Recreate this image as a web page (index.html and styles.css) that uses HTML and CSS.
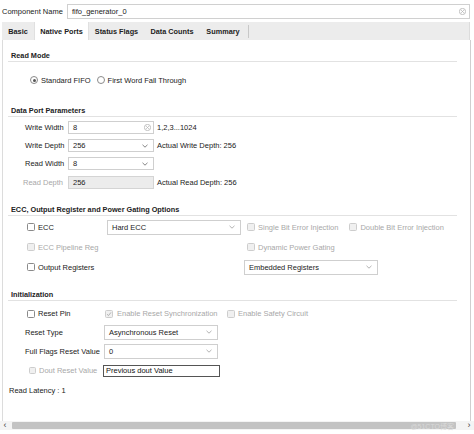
FILE: index.html
```html
<!DOCTYPE html>
<html>
<head>
<meta charset="utf-8">
<link rel="stylesheet" href="styles.css">
</head>
<body>
<div class="top">
  <span class="top-label">Component Name</span>
  <div class="name-input">
    <span>fifo_generator_0</span>
    <svg class="clear" width="7" height="7" viewBox="0 0 7 7"><circle cx="3.5" cy="3.5" r="3.1" fill="none" stroke="#b8b8b8" stroke-width="0.9"/><path d="M2.2 2.2 L4.8 4.8 M4.8 2.2 L2.2 4.8" stroke="#b8b8b8" stroke-width="0.9"/></svg>
  </div>
</div>
<div class="tabs">
  <div class="tab t-basic">Basic</div>
  <div class="tab t-native active">Native Ports</div>
  <div class="tab t-status">Status Flags</div>
  <div class="tab t-data">Data Counts</div>
  <div class="tab t-summary">Summary</div>
  <div class="tab-sep"></div>
</div>
<div class="panel">
  <div class="sec-head first">Read Mode</div>
  <div class="radio-row">
    <span class="radio on"></span><span class="rlabel">Standard FIFO</span>
    <span class="radio"></span><span class="rlabel">First Word Fall Through</span>
  </div>

  <div class="sec-head s2">Data Port Parameters</div>
  <div class="dp-rows">
    <div class="dp-row">
      <span class="dp-label">Write Width</span>
      <div class="box dp-box"><span>8</span>
        <svg class="clear" width="7" height="7" viewBox="0 0 7 7"><circle cx="3.5" cy="3.5" r="3.1" fill="none" stroke="#b8b8b8" stroke-width="0.9"/><path d="M2.2 2.2 L4.8 4.8 M4.8 2.2 L2.2 4.8" stroke="#b8b8b8" stroke-width="0.9"/></svg>
      </div>
      <span class="hint">1,2,3...1024</span>
    </div>
    <div class="dp-row">
      <span class="dp-label">Write Depth</span>
      <div class="box dp-box"><span>256</span>
        <svg class="chev" width="6" height="4" viewBox="0 0 6 4"><path d="M0.5 0.8 L3 3.2 L5.5 0.8" fill="none" stroke="#777" stroke-width="0.9"/></svg>
      </div>
      <span class="hint">Actual Write Depth: 256</span>
    </div>
    <div class="dp-row">
      <span class="dp-label">Read Width</span>
      <div class="box dp-box"><span>8</span>
        <svg class="chev" width="6" height="4" viewBox="0 0 6 4"><path d="M0.5 0.8 L3 3.2 L5.5 0.8" fill="none" stroke="#777" stroke-width="0.9"/></svg>
      </div>
    </div>
    <div class="dp-row last">
      <span class="dp-label dis rd">Read Depth</span>
      <div class="box dp-box gray"><span>256</span></div>
      <span class="hint">Actual Read Depth: 256</span>
    </div>
  </div>

  <div class="sec-head s3">ECC, Output Register and Power Gating Options</div>
  <div class="ecc-rows">
    <div class="ecc-row">
      <div class="c1"><span class="cb"></span><span class="cl">ECC</span></div>
      <div class="box sel ecc-sel"><span>Hard ECC</span>
        <svg class="chev" width="6" height="4" viewBox="0 0 6 4"><path d="M0.5 0.8 L3 3.2 L5.5 0.8" fill="none" stroke="#aaa" stroke-width="0.9"/></svg>
      </div>
      <div class="c3"><span class="cb dcb"></span><span class="cl dis">Single Bit Error Injection</span></div>
      <div class="c4"><span class="cb dcb"></span><span class="cl dis">Double Bit Error Injection</span></div>
    </div>
    <div class="ecc-row">
      <div class="c1"><span class="cb dcb"></span><span class="cl dis">ECC Pipeline Reg</span></div>
      <div class="ecc-spacer"></div>
      <div class="c3"><span class="cb dcb"></span><span class="cl dis">Dynamic Power Gating</span></div>
    </div>
    <div class="ecc-row">
      <div class="c1"><span class="cb"></span><span class="cl">Output Registers</span></div>
      <div class="ecc-spacer2"></div>
      <div class="box sel emb-sel"><span>Embedded Registers</span>
        <svg class="chev" width="6" height="4" viewBox="0 0 6 4"><path d="M0.5 0.8 L3 3.2 L5.5 0.8" fill="none" stroke="#aaa" stroke-width="0.9"/></svg>
      </div>
    </div>
  </div>

  <div class="sec-head s4">Initialization</div>
  <div class="init-rows">
    <div class="init-row">
      <div class="i1"><span class="cb"></span><span class="cl">Reset Pin</span></div>
      <div class="i2"><span class="cb dcb chk"><svg width="6" height="6" viewBox="0 0 6 6"><path d="M1 3.2 L2.5 4.6 L5 1.4" fill="none" stroke="#aaa" stroke-width="0.9"/></svg></span><span class="cl dis">Enable Reset Synchronization</span></div>
      <div class="i3"><span class="cb dcb"></span><span class="cl dis">Enable Safety Circuit</span></div>
    </div>
    <div class="init-row">
      <span class="il">Reset Type</span>
      <div class="box sel init-sel"><span>Asynchronous Reset</span>
        <svg class="chev" width="6" height="4" viewBox="0 0 6 4"><path d="M0.5 0.8 L3 3.2 L5.5 0.8" fill="none" stroke="#aaa" stroke-width="0.9"/></svg>
      </div>
    </div>
    <div class="init-row">
      <span class="il">Full Flags Reset Value</span>
      <div class="box sel init-sel"><span>0</span>
        <svg class="chev" width="6" height="4" viewBox="0 0 6 4"><path d="M0.5 0.8 L3 3.2 L5.5 0.8" fill="none" stroke="#aaa" stroke-width="0.9"/></svg>
      </div>
    </div>
    <div class="init-row">
      <div class="i1d"><span class="cb dcb"></span><span class="cl dis">Dout Reset Value</span></div>
      <div class="dout"><span>Previous dout Value</span></div>
    </div>
  </div>
  <div class="latency">Read Latency : 1</div>
</div>
<div class="scrollbar">
  <span class="arrow">&lsaquo;</span>
  <div class="track"><div class="thumb"></div><span class="wm">@51CTO博客</span></div>
  <span class="arrow">&rsaquo;</span>
</div>
</body>
</html>
```

FILE: styles.css
```css
* { box-sizing: border-box; }
html, body { margin: 0; padding: 0; background: #fff; }
body {
  width: 474px;
  height: 434px;
  overflow: hidden;
  font-family: "Liberation Sans", Arial, sans-serif;
  font-size: 7.5px;
  color: #222;
}
.top {
  display: flex;
  align-items: center;
  height: 22px;
}
.top-label { margin-left: 2px; width: 65px; }
.name-input {
  width: 403px;
  height: 15px;
  border: 1px solid #d0d0d0;
  display: flex;
  align-items: center;
  padding-left: 4px;
  position: relative;
}
.name-input .clear { position: absolute; right: 3px; top: 3px; }
.tabs {
  display: flex;
  height: 18px;
  margin-left: 2px;
  width: 468px;
  background: #ececec;
  border-right: 1px solid #dcdcdc;
}
.tab {
  display: flex;
  align-items: center;
  justify-content: center;
  font-weight: bold;
  font-size: 7.3px;
  color: #222;
}
.t-basic { width: 32px; }
.t-native { width: 55px; }
.t-status { width: 55px; }
.t-data { width: 56px; }
.t-summary { width: 46px; }
.tab.active { background: #fff; border-left: 1px solid #e0e0e0; border-right: 1px solid #e0e0e0; }
.tab-sep { width: 1px; height: 13px; background: #c8c8c8; margin-top: 3px; margin-left: 2px; }

.panel {
  margin-left: 2px;
  width: 469px;
  height: 381px;
  border-left: 1px solid #dcdcdc;
  border-right: 1px solid #cfcfcf;
  display: flex;
  flex-direction: column;
}
.sec-head {
  margin-left: 5px;
  width: 449px;
  height: 11px;
  line-height: 10px;
  padding-left: 3px;
  font-weight: bold;
  font-size: 7.3px;
  color: #222;
  border-bottom: 1px solid #e2e2e2;
  flex: none;
}
.sec-head.first { margin-top: 11px; }
.sec-head.s2 { margin-top: 19px; }
.sec-head.s3 { margin-top: 14px; }
.sec-head.s4 { margin-top: 13px; }

.radio-row {
  display: flex;
  align-items: center;
  height: 14px;
  margin-top: 11px;
  padding-left: 27px;
}
.radio {
  width: 8px; height: 8px;
  border-radius: 50%;
  border: 1px solid #8a8a8a;
  background: #fff;
  position: relative;
  flex: none;
}
.radio.on::after {
  content: "";
  position: absolute;
  left: 1.5px; top: 1.5px;
  width: 3px; height: 3px;
  border-radius: 50%;
  background: #555;
}
.rlabel { margin-left: 3px; margin-right: 6px; }

.dp-rows { margin-top: 1px; display: flex; flex-direction: column; }
.dp-row { display: flex; align-items: center; height: 18px; }
.dp-row.last { margin-top: 1px; }
.dp-label { margin-left: 22px; width: 43px; }
.dp-label.rd { margin-left: 20px; width: 45px; }
.box {
  border: 1px solid #cfcfcf;
  background: #fff;
  display: flex;
  align-items: center;
  padding-left: 4px;
  position: relative;
}
.dp-box { width: 86px; height: 13px; }
.box.gray { background: #ececec; border-color: #d4d4d4; }
.box .clear { position: absolute; right: 2px; top: 2.5px; }
.box .chev { position: absolute; right: 5px; top: 4px; }
.hint { margin-left: 3px; }
.dis { color: #a8a8a8; }

.ecc-rows { margin-top: 1px; display: flex; flex-direction: column; }
.ecc-row { display: flex; align-items: center; height: 20px; }
.c1 { margin-left: 24px; width: 80px; display: flex; align-items: center; }
.cb {
  width: 8px; height: 8px;
  border: 1px solid #8a8a8a;
  border-radius: 1.5px;
  background: #fff;
  flex: none;
  display: flex;
  align-items: center;
  justify-content: center;
}
.cb.dcb { border-color: #cdcdcd; background: #f0f0f0; }
.cl { margin-left: 3px; white-space: nowrap; }
.sel { height: 15px; }
.ecc-sel { width: 134px; }
.c3 { margin-left: 6px; display: flex; align-items: center; }
.c4 { margin-left: 11px; display: flex; align-items: center; }
.ecc-spacer { width: 134px; }
.ecc-spacer2 { width: 137px; }
.emb-sel { width: 134px; }

.init-rows { margin-top: 3px; display: flex; flex-direction: column; }
.init-row { display: flex; align-items: center; height: 19px; }
.i1 { margin-left: 24px; width: 78px; display: flex; align-items: center; }
.i2 { width: 122px; display: flex; align-items: center; }
.i2 .cl { margin-left: 4px; }
.i3 { display: flex; align-items: center; }
.il { margin-left: 22px; width: 79px; white-space: nowrap; }
.init-sel { width: 114px; }
.i1d { margin-left: 26px; width: 74px; display: flex; align-items: center; }
.i1d .cb { width: 7px; height: 7px; }
.dout {
  width: 117px;
  height: 12px;
  border: 1px solid #555;
  display: flex;
  align-items: center;
  padding-left: 2px;
  color: #111;
}
.latency { margin-left: 6px; margin-top: 4px; height: 14px; line-height: 14px; }

.scrollbar {
  display: flex;
  align-items: center;
  height: 9px;
  margin-top: 0;
  background: #f4f4f4;
}
.arrow { width: 10px; text-align: center; font-size: 9px; line-height: 9px; color: #444; flex: none; }
.track { flex: 1; height: 7px; position: relative; margin: 0 2px; }
.thumb { position: absolute; left: 0; top: 0; right: 6px; height: 7px; background: #c3c3c3; border-radius: 1px; }
.wm {
  position: absolute; right: 8px; top: -1px;
  font-family: "Liberation Sans", "Noto Sans CJK SC", sans-serif;
  font-size: 7px; color: #d8d8d8;
}
```
